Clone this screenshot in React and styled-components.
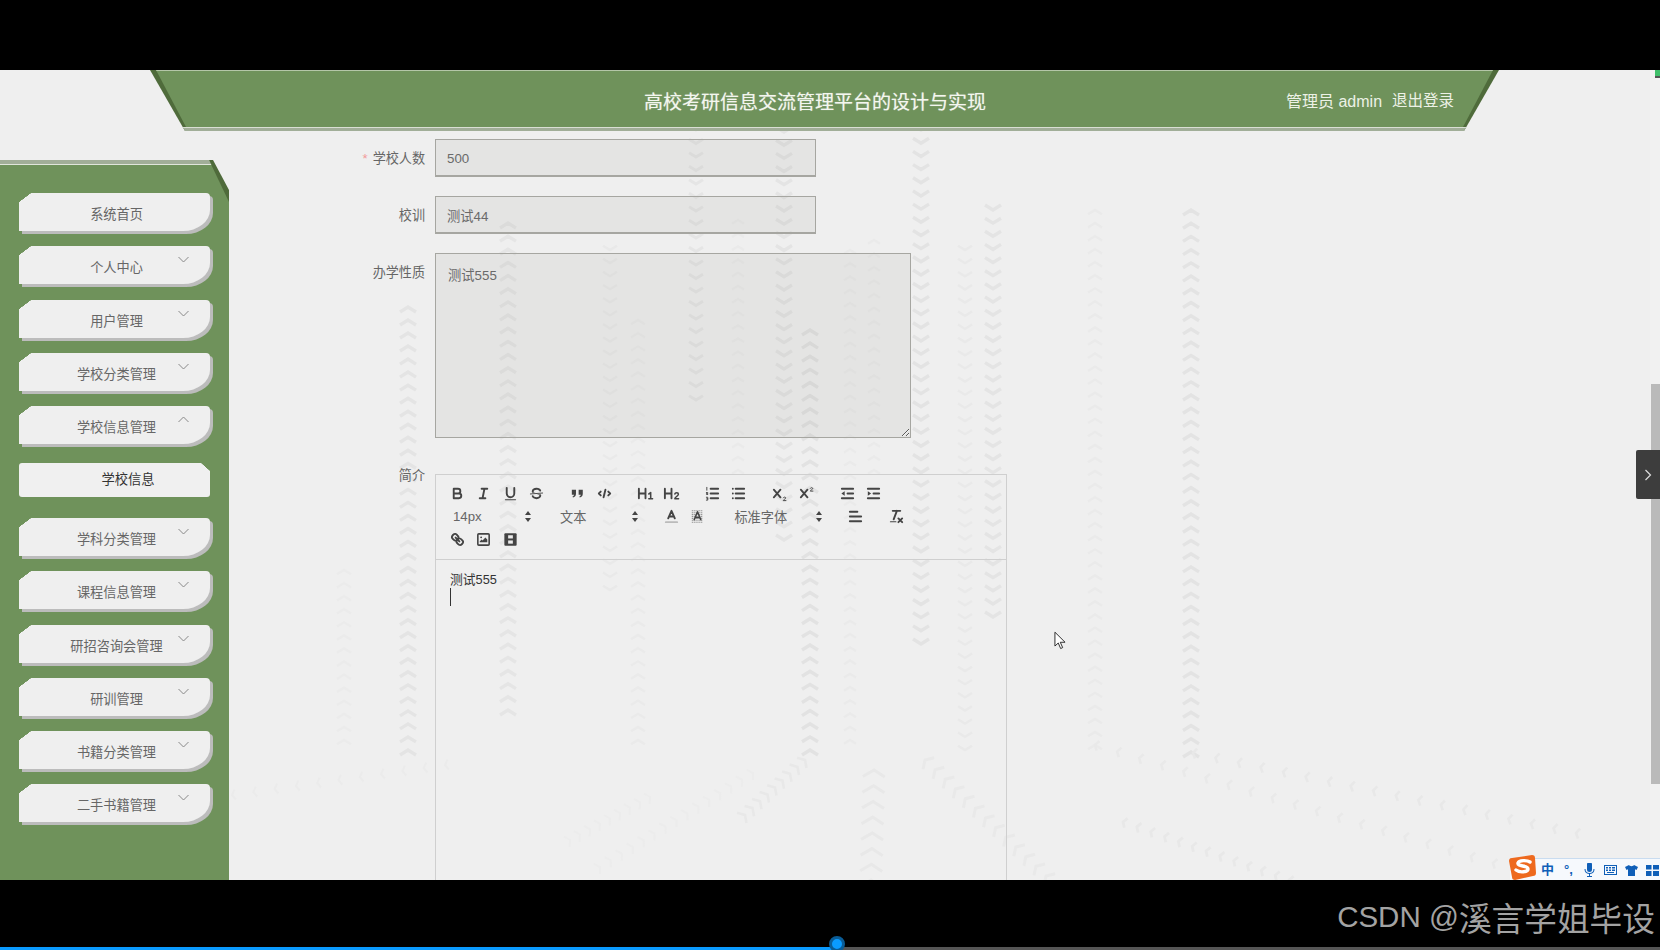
import React from 'react';
import styled, { createGlobalStyle } from 'styled-components';

const GREEN = '#6f925b';
const FONT = '"Liberation Sans", "Noto Sans CJK SC", sans-serif';

const Global = createGlobalStyle`
  html, body { margin: 0; padding: 0; background: #000; overflow: hidden; }
  * { box-sizing: border-box; }
`;

const Screen = styled.div`
  width: 1660px; height: 950px; display: flex; flex-direction: column;
  background: #000; overflow: hidden; font-family: ${FONT};
`;
const TopBlack = styled.div`height: 70px; flex: none;`;
const Page = styled.div`
  position: relative; height: 810px; flex: none; overflow: hidden; background: #efefef;
`;
const Backdrop = styled.svg`
  position: absolute; left: 0; top: 0; width: 1660px; height: 810px; filter: blur(0.7px);
`;
const HeaderRow = styled.div`position: relative; padding: 0 161px 0 150px; height: 61px;`;
const Header = styled.header`
  height: 61px; display: flex; flex-direction: column; background: #4f6b3b;
  clip-path: polygon(0 0, 100% 0, calc(100% - 35px) 100%, 35px 100%);
`;
const HeaderFace = styled.div`
  height: 57px; flex: none; display: flex; align-items: center; padding: 3px 45px 0 194px;
  background: ${GREEN}; box-shadow: inset 0 1px 0 #b4c6a8;
  clip-path: polygon(6px 0, calc(100% - 6px) 0, calc(100% - 36px) 100%, 36px 100%);
`;
const Title = styled.div`
  flex: 1; text-align: center; color: #f4f6ef; font-size: 19px; white-space: nowrap;
  text-shadow: 0 0 1px rgba(255, 255, 255, 0.5);
`;
const UserBox = styled.div`
  width: 168px; display: flex; justify-content: space-between; color: #ecf1e6;
  font-size: 15.5px; white-space: nowrap;
`;
const UserName = styled.span`font-size: 16px;`;
const HeaderBand = styled.div`
  flex: 1; background: linear-gradient(#d9dfd3 0 1px, #a1ae98 1px 100%);
`;
const Body = styled.div`position: relative; display: flex; align-items: flex-start;`;
const Sidebar = styled.aside`
  width: 229px; height: 720px; flex: none; margin-top: 29px; background: #4f6b3b;
  clip-path: polygon(0 0, 213px 0, 229px 30px, 100% 100%, 0 100%);
`;
const SideFace = styled.div`
  height: 100%; background: ${GREEN};
  clip-path: polygon(0 0, 209px 0, 229px 42px, 100% 100%, 0 100%);
`;
const SideBand = styled.div`
  height: 5px; background: linear-gradient(#a1ae98 0 4px, #e0e5db 4px 100%);
`;
const Menu = styled.nav`
  display: flex; flex-direction: column; gap: 15.3px; padding: 28px 0 0 19px; width: 194px;
`;
const MenuItem = styled.div`
  position: relative; width: 191px; height: 38px; flex: none; padding: 4px 0 0 4px;
  background: #efefef; color: #666; font-size: 13.2px; text-align: center; line-height: 35px;
  border-radius: 0 4px 27px 0 / 0 4px 21px 0; box-shadow: 3px 3px 0 #bcbcbc;
  &::before {
    content: ''; position: absolute; left: 0; top: 0; width: 12px; height: 9px;
    background: linear-gradient(to bottom right, ${GREEN} 50%, transparent 52%);
  }
`;
const Caret = styled.svg`
  position: absolute; left: 159px; top: 10px; width: 11px; height: 7px;
  fill: none; stroke: #888; stroke-width: 1;
`;
const SubItem = styled.div`
  position: relative; width: 191px; height: 34px; flex: none; margin: 3.6px 0 5.6px;
  background: #f0f0f0; border-radius: 3px; color: #333; font-size: 13.3px; line-height: 34px;
  text-align: center; padding-left: 27px;
  &::after {
    content: ''; position: absolute; right: 0; top: 0; width: 9px; height: 8px;
    background: linear-gradient(to top right, transparent 48%, ${GREEN} 52%);
  }
`;
const Main = styled.main`flex: 1; padding: 8px 0 0 0;`;
const Row = styled.div`
  display: flex; gap: 10px; margin-bottom: ${p => p.$gap || 19}px; align-items: flex-start;
`;
const Label = styled.label`
  width: 196px; height: 18px; flex: none; text-align: right; color: #666; font-size: 13.1px;
  line-height: ${p => p.$line || 40}px; margin-top: ${p => p.$shift || 0}px;
`;
const Star = styled.span`color: #f29a9a; margin-right: 5px;`;
const Field = styled.input`
  width: 381px; height: 38px; padding: 1px 11px 0; border: 1px solid #a6a6a1; border-bottom-width: 2px;
  background: rgba(60, 60, 40, 0.055); color: #6a6a6a; font: 13.3px ${FONT}; outline: none; border-radius: 0;
`;
const Area = styled.textarea`
  display: block; width: 476px; height: 185px; padding: 13px 12px; border: 1px solid #a6a6a1;
  background: rgba(60, 60, 40, 0.055); color: #6a6a6a; font: 13.3px/17px ${FONT}; outline: none; border-radius: 0;
`;
const Editor = styled.div`width: 572px; height: 420px; flex: none; border: 1px solid #cfcfcf;`;
const Toolbar = styled.div`
  height: 85px; padding: 7.5px 8px 0; border-bottom: 1px solid #cfcfcf;
  display: flex; flex-direction: column;
`;
const ToolRow = styled.div`display: flex; height: ${p => p.$h}px; align-items: center;`;
const Group = styled.div`
  display: flex; align-items: center; margin-left: ${p => p.$ml || 0}px; margin-right: 14.4px;
`;
const Tool = styled.span`
  width: 26.5px; height: 22px; display: flex; align-items: center; justify-content: center;
  svg { width: 17px; height: 17px; fill: none; stroke: #444; stroke-width: 2; stroke-linecap: round; stroke-linejoin: round; overflow: visible; }
  .f { fill: #444; stroke: none; }
  .t { stroke-width: 1; }
  .g { stroke: #bbb; }
  .h { stroke: #777; stroke-width: 1.1; stroke-linecap: butt; }
`;
const Picker = styled.div`
  width: ${p => p.$w}px; margin-left: ${p => p.$ml || 0}px; height: 22px; padding: 0 5px 0 9px;
  display: flex; align-items: center; justify-content: space-between;
  color: #666; font-size: 13.2px; white-space: nowrap;
`;
const PickerArrows = styled.svg`width: 6px; height: 11px; fill: #444; flex: none;`;
const Content = styled.div`padding: 11px 14px; color: #333; font-size: 12.8px; line-height: 17px;`;
const TextCursor = styled.div`width: 1px; height: 18px; background: #333;`;
const ScrollTrack = styled.div`
  position: absolute; right: 0; top: 0; width: 10px; height: 100%; background: #f1f1f1;
`;
const ScrollThumb = styled.div`
  position: absolute; left: 1px; right: 0; top: 314px; height: 400px; background: #bababa;
`;
const GreenNub = styled.div`
  position: absolute; right: 0; top: 0; width: 5px; height: 8px; background: #3fbf6a;
  border-bottom: 2px solid #555;
`;
const SideTab = styled.div`
  position: absolute; right: 0; top: 380px; width: 24px; height: 49px; background: #3d3d3d;
  border-radius: 2px 0 0 2px; display: flex; align-items: center; justify-content: center;
`;
const TabChevron = styled.svg`width: 8px; height: 12px; fill: none; stroke: #ddd; stroke-width: 1.2;`;
const Pointer = styled.svg`position: absolute; left: 1054px; top: 561px; width: 12px; height: 19px;`;
const Ime = styled.div`
  position: absolute; right: 0; bottom: 0; width: 150px; height: 22px; padding-left: 31px;
  display: flex; align-items: center; gap: 8px; background: #f6f9fd; border-top: 1px solid #c9dcf0;
  color: #0f5fb8; font-size: 13px; font-weight: 700; white-space: nowrap; overflow: hidden;
`;
const ImeGlyph = styled.span`width: 13px; flex: none; text-align: center; line-height: 14px;`;
const ImeLogo = styled.svg`position: absolute; right: 124px; bottom: -1px; width: 28px; height: 27px;`;
const ImeIcon = styled.svg`width: 13px; height: 14px; flex: none; fill: #0f5fb8;`;
const Bottom = styled.div`position: relative; flex: 1; display: flex; flex-direction: column;`;
const Watermark = styled.div`
  flex: 1; display: flex; justify-content: flex-end; align-items: center; padding: 6px 5px 0 0;
  color: #a3a3a3; font-size: 29.5px; white-space: pre;
`;
const Cjk = styled.span`font-size: 32.7px;`;
const Progress = styled.div`
  height: 3px; flex: none; background: linear-gradient(to right, #0a9bff 0 836px, #555 836px 100%);
`;
const ProgressDot = styled.div`
  position: absolute; left: 829px; bottom: -2px; width: 16px; height: 16px; border-radius: 50%;
  background: #0a9bff; border: 3px solid #0a5c96;
`;

/* faint chevron tracks of the background picture, in page coordinates */
const track = (x1, y1, x2, y2, dir, w, step) => {
  const len = Math.hypot(x2 - x1, y2 - y1);
  const ux = (x2 - x1) / len, uy = (y2 - y1) / len;
  const nx = -uy, ny = ux;
  const n = Math.floor(len / step);
  let d = '';
  for (let i = 0; i <= n; i++) {
    const t = i / Math.max(n, 1);
    const cx = x1 + (x2 - x1) * t, cy = y1 + (y2 - y1) * t;
    const k = dir * w * 0.62;
    d += `M${(cx - nx * w + ux * k).toFixed(1)} ${(cy - ny * w + uy * k).toFixed(1)}L${cx.toFixed(1)} ${cy.toFixed(1)}L${(cx + nx * w + ux * k).toFixed(1)} ${(cy + ny * w + uy * k).toFixed(1)}`;
  }
  return d;
};
const TRACKS = [
  [408, 237, 408, 680, 1, 8, 13, '#e4e4e4', 3.4], [344, 500, 344, 670, 1, 7, 13, '#ebebeb', 2.4],
  [508, 153, 508, 640, 1, 8, 13, '#e5e5e5', 3.4], [638, 250, 638, 670, 1, 7, 13, '#eaeaea', 2.4],
  [610, 180, 610, 520, -1, 7, 13, '#e9e9e9', 2.4], [696, 60, 696, 330, -1, 7, 13, '#e5e5e5', 3],
  [738, 150, 738, 400, 1, 6, 13, '#eaeaea', 2.4], [784, 62, 784, 470, -1, 8, 13, '#e4e4e4', 3.4],
  [810, 260, 810, 680, 1, 8, 13, '#e2e2e2', 3.4], [850, 180, 850, 670, 1, 6, 13, '#eaeaea', 2.4],
  [874, 170, 874, 400, 1, 6, 13, '#eaeaea', 2.4], [921, 60, 921, 574, -1, 8, 13, '#e3e3e3', 3.4],
  [965, 180, 965, 680, -1, 7, 13, '#e9e9e9', 2.4], [993, 140, 993, 547, -1, 8, 13, '#e4e4e4', 3.4],
  [1095, 140, 1095, 675, 1, 7, 13, '#eaeaea', 2.4], [1191, 140, 1191, 682, 1, 8, 13, '#e3e3e3', 3.4],
  [805, 690, 745, 745, 1, 7, 10, '#e8e8e8', 2.6], [753, 703, 600, 797, 1, 6, 12, '#ececec', 2],
  [650, 727, 570, 770, 1, 6, 11, '#ececec', 2], [874, 700, 871, 810, 1, 11, 14, '#e8e8e8', 3],
  [925, 690, 1046, 806, 1, 8, 13, '#e9e9e9', 3], [1193, 683, 1576, 763, 1, 5, 22, '#e8e8e8', 2.6],
  [1095, 675, 1493, 793, 1, 5, 22, '#e9e9e9', 2.6], [1123, 752, 1289, 810, 1, 5, 14, '#e8e8e8', 2.8],
  [232, 725, 445, 695, 1, 5, 20, '#ebebeb', 2],
];

const TrackArt = () => (
  <Backdrop viewBox="0 0 1660 810" aria-hidden="true">
    {TRACKS.map(([x1, y1, x2, y2, dir, w, step, color, sw]) => (
      <path key={`${x1}-${y1}`} d={track(x1, y1, x2, y2, dir, w, step)} fill="none" stroke={color} strokeWidth={sw} />
    ))}
  </Backdrop>
);

const Ic = ({ children }) => <Tool><svg viewBox="0 0 18 18">{children}</svg></Tool>;

const Bold = () => <Ic><path d="M5 4h4.500a2.500 2.500 0 0 1 0 5H5zM5 9h5.500a2.500 2.500 0 0 1 0 5H5z" /></Ic>;
const Italic = () => <Ic><path d="M7 4h6M5 14h6M10 4 8 14" /></Ic>;
const Underline = () => <Ic><path d="M5 3v6a4 4 0 0 0 8 0V3" /><rect className="f" x="3" y="15" width="12" height="1.2" rx=".5" /></Ic>;
const Strike = () => <Ic><path className="t" d="M15.5 8.500 2.500 9.500" /><path className="f" d="M9 8C6.500 7.800 6 7.500 6 6.500 6 5.800 7.300 5 9 5c1.600 0 2.800.7 3 1.300a1 1 0 0 0 1.900-.6C13.400 4.100 11.400 3 9 3 6.200 3 4 4.500 4 6.500c0 .7.2 1.300.5 1.800zM9 10c2.500.2 3 .5 3 1.500 0 .7-1.300 1.500-3 1.500-1.600 0-2.800-.7-3-1.300a1 1 0 1 0-1.900.6C4.600 13.900 6.600 15 9 15c2.800 0 5-1.500 5-3.500 0-.7-.2-1.300-.5-1.800z" /></Ic>;
const Quote = () => <Ic><path className="f" d="M3 5h4.400v4.200c0 2.200-1.200 3.500-3.200 4l-.5-1.100c1-.4 1.600-1 1.600-1.900H3zM10.200 5h4.400v4.200c0 2.200-1.200 3.500-3.200 4l-.5-1.100c1-.4 1.600-1 1.600-1.900h-2.300z" /></Ic>;
const Code = () => <Ic><path d="M5 7 3 9l2 2M13 7l2 2-2 2M10 5 8 13" /></Ic>;
const H1 = () => <Ic><path d="M2 4v10M9 4v10M2 9h7" /><path d="M12.500 9.500 14.500 8v6.500M12.500 14.500h4" strokeWidth="1.6" /></Ic>;
const H2 = () => <Ic><path d="M2 4v10M9 4v10M2 9h7" /><path d="M12.500 9.500c.5-1.800 3.800-1.800 3.800.3 0 1.700-3.800 3-3.800 4.700h4" strokeWidth="1.6" /></Ic>;
const Ordered = () => <Ic><path d="M7 4h8M7 9h8M7 14h8" /><path className="t" d="M3 2.500v3M2.500 8h1.500v1H2.600v1H4M2.500 13H4v3H2.500M3 14.500h1" /></Ic>;
const Bullet = () => <Ic><path d="M6 4h9M6 9h9M6 14h9M3 4h.01M3 9h.01M3 14h.01" /></Ic>;
const Sub = () => <Ic><path d="m3 5 7 8M10 5l-7 8" /><path d="M13 13.500c.4-1 2.600-1 2.600.2 0 1.100-2.600 1.700-2.600 2.800h2.800" strokeWidth="1" /></Ic>;
const Sup = () => <Ic><path d="m3 5 7 8M10 5l-7 8" /><path d="M13 3.500c.4-1 2.600-1 2.600.2 0 1.100-2.600 1.700-2.600 2.800h2.800" strokeWidth="1" /></Ic>;
const Outdent = () => <Ic><path d="M3 14h12M3 4h12M9 9h6" /><path className="f" d="M6 6.500v5L2.500 9z" /></Ic>;
const Indent = () => <Ic><path d="M3 14h12M3 4h12M9 9h6" /><path className="f" d="M3 6.500v5L6.500 9z" /></Ic>;
const ColorA = () => <Ic><path className="g" d="M3 15h12" /><path d="M5.500 11 9 3l3.500 8M6.400 9h5.200" /></Ic>;
const Background = () => (
  <Ic>
    <path className="h" d="M3 3h12M3 5h12M3 7h12M3 9h12M3 11h12M3 13h12M3 15h12" strokeDasharray="1 1" />
    <path d="M5.500 12.500 9 4l3.500 8.500M6.400 10h5.200" strokeWidth="1.6" />
  </Ic>
);
const AlignLeft = () => <Ic><path d="M3 4h8M3 9h12M3 14h12" /></Ic>;
const Clean = () => <Ic><path d="M5 3h8M6 12l3.400-9M11 11l4 4M15 11l-4 4" /><rect className="f" x="2" y="14" width="7" height="1.2" rx=".5" /></Ic>;
const LinkIc = () => <Ic><path d="M7 7l4 4M8.900 4.600a3.500 3.500 0 0 1 .4 4.700 3.500 3.500 0 0 1-4.700-.4C3.200 7.500 2 6.400 4.200 4.200S7.500 3.200 8.900 4.600zM13.400 9.100a3.500 3.500 0 0 0-4.700-.4 3.500 3.500 0 0 0 .4 4.700c1.400 1.400 2.500 2.500 4.700.4s1-3.300-.4-4.700z" /></Ic>;
const ImageIc = () => <Ic><rect x="3" y="3" width="12" height="12" rx="1" strokeWidth="1.7" /><path className="f" d="M5 12v-1l2-2 1 1 3-3 2 2v3z" /><circle className="f" cx="6.500" cy="6.700" r="1" /></Ic>;
const VideoIc = () => <Ic><rect className="f" x="2.500" y="2.500" width="13" height="13" rx="1" /><rect x="6.500" y="4.500" width="5" height="3.400" fill="#ececec" stroke="none" /><rect x="6.500" y="10" width="5" height="3.400" fill="#ececec" stroke="none" /></Ic>;

const Arrows = () => (
  <PickerArrows viewBox="0 0 6 11"><path d="M3 0 6 4H0zM3 11 0 7h6z" /></PickerArrows>
);
const CaretDown = () => <Caret viewBox="0 0 11 7"><path d="M.5 1 5.500 6l5-5" /></Caret>;
const CaretUp = () => <Caret viewBox="0 0 11 7"><path d="M.5 6l5-5 5 5" /></Caret>;

const MENU_TOP = [['系统首页'], ['个人中心', 'd'], ['用户管理', 'd'], ['学校分类管理', 'd'], ['学校信息管理', 'u']];
const MENU_REST = ['学科分类管理', '课程信息管理', '研招咨询会管理', '研训管理', '书籍分类管理', '二手书籍管理'];

export default function App() {
  return (
    <Screen>
      <Global />
      <TopBlack />
      <Page>
        <TrackArt />
        <HeaderRow>
          <Header>
            <HeaderFace>
              <Title>高校考研信息交流管理平台的设计与实现</Title>
              <UserBox><UserName>管理员 admin</UserName><span>退出登录</span></UserBox>
            </HeaderFace>
            <HeaderBand />
          </Header>
        </HeaderRow>
        <Body>
          <Sidebar>
            <SideFace>
              <SideBand />
              <Menu>
                {MENU_TOP.map(([label, c]) => (
                  <MenuItem key={label}>
                    {label}
                    {c === 'd' && <CaretDown />}
                    {c === 'u' && <CaretUp />}
                  </MenuItem>
                ))}
                <SubItem>学校信息</SubItem>
                {MENU_REST.map(label => (
                  <MenuItem key={label}>{label}<CaretDown /></MenuItem>
                ))}
              </Menu>
            </SideFace>
          </Sidebar>
          <Main>
            <Row>
              <Label><Star>*</Star>学校人数</Label>
              <Field readOnly defaultValue="500" />
            </Row>
            <Row>
              <Label>校训</Label>
              <Field readOnly defaultValue="测试44" />
            </Row>
            <Row $gap={36}>
              <Label>办学性质</Label>
              <Area readOnly defaultValue="测试555" />
            </Row>
            <Row>
              <Label $line={18} $shift={-7}>简介</Label>
              <Editor>
                <Toolbar>
                  <ToolRow $h={22}>
                    <Group><Bold /><Italic /><Underline /><Strike /></Group>
                    <Group><Quote /><Code /></Group>
                    <Group><H1 /><H2 /></Group>
                    <Group><Ordered /><Bullet /></Group>
                    <Group><Sub /><Sup /></Group>
                    <Group><Outdent /><Indent /></Group>
                  </ToolRow>
                  <ToolRow $h={23}>
                    <Picker $w={92}>14px<Arrows /></Picker>
                    <Picker $w={92} $ml={15}>文本<Arrows /></Picker>
                    <Group $ml={15}><ColorA /><Background /></Group>
                    <Picker $w={102}>标准字体<Arrows /></Picker>
                    <Group $ml={15}><AlignLeft /></Group>
                    <Group><Clean /></Group>
                  </ToolRow>
                  <ToolRow $h={24}>
                    <Group><LinkIc /><ImageIc /><VideoIc /></Group>
                  </ToolRow>
                </Toolbar>
                <Content>
                  测试555
                  <TextCursor />
                </Content>
              </Editor>
            </Row>
          </Main>
        </Body>
        <ScrollTrack>
          <GreenNub />
          <ScrollThumb />
        </ScrollTrack>
        <SideTab>
          <TabChevron viewBox="0 0 8 12"><path d="m1.500 1 5 5-5 5" /></TabChevron>
        </SideTab>
        <Pointer viewBox="0 0 13 20">
          <path d="M1 1v15l3.600-3.300 2.600 6 2.200-1-2.600-5.800H12z" fill="#fff" stroke="#222" strokeWidth="1" />
        </Pointer>
        <Ime>
          <ImeGlyph>中</ImeGlyph>
          <ImeGlyph>°,</ImeGlyph>
          <ImeIcon viewBox="0 0 13 14"><path d="M4 1.500a2.500 2.500 0 0 1 5 0v5a2.500 2.500 0 0 1-5 0zM1.500 6h1a4 4 0 0 0 8 0h1a5 5 0 0 1-4.500 5v2h2v1h-5v-1h2v-2A5 5 0 0 1 1.500 6z" /></ImeIcon>
          <ImeIcon viewBox="0 0 13 14"><path fillRule="evenodd" d="M0 2h13v10H0zm1 1v8h11V3zm1 1h2v1.500H2zm3 0h2v1.500H5zm3 0h3v1.500H8zM2 6.500h2V8H2zm3 0h2V8H5zm3 0h3V8H8zM3 9h7v1H3z" /></ImeIcon>
          <ImeIcon viewBox="0 0 13 14"><path d="M4 2 0 4l1.500 3L3 6.300V13h7V6.300L11.500 7 13 4 9 2c-.5 1.500-4.500 1.500-5 0z" /></ImeIcon>
          <ImeIcon viewBox="0 0 13 14"><path d="M0 2h5.500v4.500H0zM7 2h6v4.500H7zM0 8h5.500v5H0zM7 8h6v5H7z" /></ImeIcon>
        </Ime>
        <ImeLogo viewBox="0 0 28 27">
          <path d="M4 4 24 1q3 0 3 3l1 15q0 3-3 3L7 26q-3 0-3-3L1 7q0-3 3-3z" fill="#ee6a1f" />
          <path d="M22 8c-3-2-11-2-12 1-1 4 10 2 10 6 0 3-8 4-12 1" fill="none" stroke="#fff" strokeWidth="3.4" strokeLinecap="round" />
        </ImeLogo>
      </Page>
      <Bottom>
        <Watermark>CSDN @<Cjk>溪言学姐毕设</Cjk></Watermark>
        <Progress />
        <ProgressDot />
      </Bottom>
    </Screen>
  );
}
